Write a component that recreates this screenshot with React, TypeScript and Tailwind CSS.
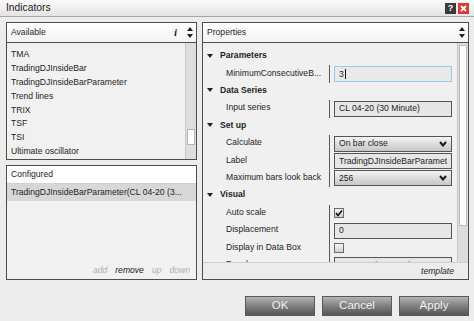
import React from 'react'

const available = [
  'TMA',
  'TradingDJInsideBar',
  'TradingDJInsideBarParameter',
  'Trend lines',
  'TRIX',
  'TSF',
  'TSI',
  'Ultimate oscillator'
]

type Prop = { name: string; kind: 'text' | 'select' | 'check' | 'focus' | 'box'; value?: string; checked?: boolean }

const sections: { title: string; props: Prop[] }[] = [
  { title: 'Parameters', props: [{ name: 'MinimumConsecutiveB...', kind: 'focus', value: '3' }] },
  { title: 'Data Series', props: [{ name: 'Input series', kind: 'box', value: 'CL 04-20 (30 Minute)' }] },
  {
    title: 'Set up',
    props: [
      { name: 'Calculate', kind: 'select', value: 'On bar close' },
      { name: 'Label', kind: 'text', value: 'TradingDJInsideBarParameter' },
      { name: 'Maximum bars look back', kind: 'select', value: '256' }
    ]
  },
  {
    title: 'Visual',
    props: [
      { name: 'Auto scale', kind: 'check', checked: true },
      { name: 'Displacement', kind: 'text', value: '0' },
      { name: 'Display in Data Box', kind: 'check', checked: false },
      { name: 'Panel', kind: 'box', value: 'Same as input series' }
    ]
  }
]

function UpDown() {
  return (
    <div className="flex flex-col items-center gap-[3px]">
      <svg width="6" height="4" viewBox="0 0 6 4"><path d="M0 4 L3 0 L6 4 Z" fill="#222" /></svg>
      <svg width="6" height="4" viewBox="0 0 6 4"><path d="M0 0 L6 0 L3 4 Z" fill="#222" /></svg>
    </div>
  )
}

function Chevron() {
  return (
    <svg width="8" height="6" viewBox="0 0 8 6" className="shrink-0">
      <path d="M1 1 L4 4.5 L7 1" fill="none" stroke="#1a1a1a" strokeWidth="2" />
    </svg>
  )
}

function Value({ p }: { p: Prop }) {
  if (p.kind === 'check') {
    return (
      <div className="h-[17.4px] flex items-center pl-[4px]">
        <div className="w-[10px] h-[10px] border border-[#6a6a6a] bg-gradient-to-b from-[#f6f6f6] to-[#cfcfcf] flex items-center justify-center">
          {p.checked && (
            <svg width="8" height="8" viewBox="0 0 8 8"><path d="M1 4 L3 6.5 L7 1.5" fill="none" stroke="#111" strokeWidth="1.6" /></svg>
          )}
        </div>
      </div>
    )
  }
  const base = 'w-[118px] h-[16px] flex items-center px-[4px] border overflow-hidden whitespace-nowrap'
  let cls = `${base} border-[#555] bg-[#e6e6e6]`
  if (p.kind === 'focus') cls = `${base} border-[#8fd0ea] bg-[#e9e9e9]`
  if (p.kind === 'select') cls = `${base} border-[#555] bg-gradient-to-b from-[#f4f4f4] to-[#c6c6c6] justify-between`
  return (
    <div className="h-[17.4px] flex items-center pl-[4px]">
      <div className={cls}>
        <span className="overflow-hidden">{p.value}</span>
        {p.kind === 'focus' && <span className="w-px h-[10px] bg-[#111] ml-px" />}
        {p.kind === 'select' && <Chevron />}
      </div>
    </div>
  )
}

export default function App() {
  return (
    <div className="w-[474px] h-[321px] bg-[#ececec] flex flex-col overflow-hidden text-[#1e1e1e] text-[8.6px] font-['Liberation_Sans',Arial,sans-serif]">
      {/* Title bar */}
      <div className="h-[17px] shrink-0 flex items-center pl-[6px] pr-[5px] border-b border-[#a5a5a5] bg-gradient-to-b from-[#fafafa] to-[#e4e4e4]">
        <span className="text-[10.3px] text-[#222]">Indicators</span>
        <div className="ml-auto flex gap-[2px]">
          <div className="w-[11px] h-[11px] bg-[#3a3a3a] text-white text-[9px] font-bold leading-none flex items-center justify-center">?</div>
          <div className="w-[11px] h-[11px] bg-[#d83a3a] flex items-center justify-center">
            <svg width="7" height="7" viewBox="0 0 7 7"><path d="M1 1 L6 6 M6 1 L1 6" stroke="#fff" strokeWidth="1.8" /></svg>
          </div>
        </div>
      </div>

      <div className="flex gap-[5px] pl-[6px] pt-[5px] shrink-0">
        {/* Left column */}
        <div className="w-[191px] flex flex-col gap-[5px]">
          <div className="h-[138px] border border-[#4d4d4d] bg-[#f1f1f1] flex flex-col">
            <div className="h-[20px] shrink-0 flex items-center pl-[4px] pr-[3px] border-b border-[#4d4d4d] bg-gradient-to-b from-white to-[#f3f3f3]">
              <span>Available</span>
              <span className="ml-auto mr-[10px] font-['Liberation_Serif',serif] italic font-bold text-[11px]">i</span>
              <UpDown />
            </div>
            <div className="flex-1 flex min-h-0">
              <div className="flex-1 pt-[5px] pl-[4px]">
                {available.map(a => (
                  <div key={a} className="h-[13.8px] flex items-center">{a}</div>
                ))}
              </div>
              <div className="w-[11px] bg-[#dedede] border-l border-[#cacaca] flex flex-col">
                <div className="mt-[86px] h-[16px] mx-[1px] bg-white border border-[#b4b4b4]" />
              </div>
            </div>
          </div>

          <div className="h-[115px] border border-[#4d4d4d] bg-[#f1f1f1] flex flex-col">
            <div className="h-[18px] shrink-0 flex items-center pl-[4px] border-b border-[#cfcfcf] bg-white">Configured</div>
            <div className="h-[17px] shrink-0 flex items-center pl-[4px] bg-[#d7d7d7]">TradingDJInsideBarParameter(CL 04-20 (3...</div>
            <div className="flex-1" />
            <div className="h-[18px] shrink-0 flex items-center justify-end gap-[8px] pr-[6px] italic">
              <span className="text-[#b0b0b0]">add</span>
              <span className="text-[#1a1a1a]">remove</span>
              <span className="text-[#b0b0b0]">up</span>
              <span className="text-[#b0b0b0]">down</span>
            </div>
          </div>
        </div>

        {/* Right panel */}
        <div className="w-[267px] h-[258px] border border-[#4d4d4d] bg-[#ececec] flex flex-col">
          <div className="h-[20px] shrink-0 flex items-center pl-[4px] pr-[3px] border-b border-[#4d4d4d] bg-gradient-to-b from-white to-[#f3f3f3]">
            <span>Properties</span>
            <div className="ml-auto"><UpDown /></div>
          </div>
          <div className="h-[219px] shrink-0 flex bg-[#f0f0f0] overflow-hidden">
            <div className="flex-1 pt-[4px] overflow-hidden">
              {sections.map(s => (
                <div key={s.title}>
                  <div className="h-[17.4px] flex items-center pl-[4px]">
                    <svg width="6" height="4" viewBox="0 0 6 4"><path d="M0 0 L6 0 L3 4 Z" fill="#222" /></svg>
                    <span className="ml-[7px] font-bold">{s.title}</span>
                  </div>
                  <div className="flex">
                    <div className="w-[126px] shrink-0">
                      {s.props.map(p => (
                        <div key={p.name} className="h-[17.4px] flex items-center pl-[23px] whitespace-nowrap">{p.name}</div>
                      ))}
                    </div>
                    <div className="flex-1 border-l border-[#5a5a5a] my-[1px] -mb-[1px]">
                      {s.props.map(p => (
                        <Value key={p.name} p={p} />
                      ))}
                    </div>
                  </div>
                </div>
              ))}
            </div>
            <div className="w-[11px] shrink-0 bg-[#dcdcdc] border-l border-[#c8c8c8] flex flex-col">
              <div className="mt-[2px] h-[181px] mx-[1px] bg-[#fbfbfb] border border-[#bdbdbd]" />
            </div>
          </div>
          <div className="flex-1 flex items-center justify-end pr-[14px] italic border-t border-[#d0d0d0]">template</div>
        </div>
      </div>

      {/* Buttons */}
      <div className="flex justify-end gap-[7px] pr-[5px] mt-[16px]">
        {['OK', 'Cancel', 'Apply'].map(b => (
          <div
            key={b}
            className="w-[70px] h-[20px] flex items-center justify-center border border-[#585858] bg-gradient-to-b from-[#b4b4b4] via-[#808080] to-[#555] text-[#f0f0f0] text-[11.5px]"
          >
            {b}
          </div>
        ))}
      </div>
    </div>
  )
}
